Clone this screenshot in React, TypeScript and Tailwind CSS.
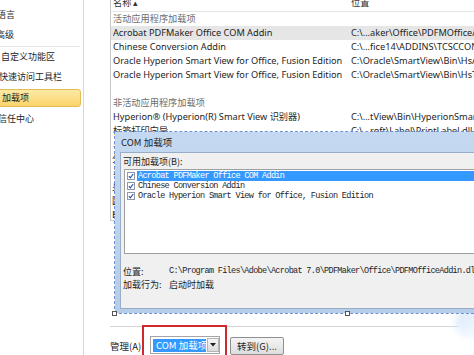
import React from "react";

const cjk = { fontFamily: '"Noto Sans CJK SC", "Noto Sans", sans-serif' };
const ui = { fontFamily: '"Noto Sans", "Noto Sans CJK SC", sans-serif' };
const mono = { fontFamily: '"Liberation Mono", "Noto Sans CJK SC", monospace' };

const sideItems = [
  { label: "语言", shift: "-ml-[3px]" },
  { label: "高级", shift: "-ml-[4px]" },
];
const sideItems2 = [
  { label: "自定义功能区", shift: "ml-[1px]" },
  { label: "快速访问工具栏", shift: "-ml-[1px]" },
];

const activeRows = [
  ["Acrobat PDFMaker Office COM Addin", "C:\\...aker\\Office\\PDFMOfficeAddin.dll"],
  ["Chinese Conversion Addin", "C:\\...fice14\\ADDINS\\TCSCCONV.DLL"],
  ["Oracle Hyperion Smart View for Office, Fusion Edition", "C:\\Oracle\\SmartView\\Bin\\HsAddin.dll"],
  ["Oracle Hyperion Smart View for Office, Fusion Edition", "C:\\Oracle\\SmartView\\Bin\\HsTBar.xla"],
];

const hiddenRows = ["ミ", "分", "ミ", "身", "図", "E"];

const comItems = [
  "Acrobat PDFMaker Office COM Addin",
  "Chinese Conversion Addin",
  "Oracle Hyperion Smart View for Office, Fusion Edition",
];

const Check = () => (
  <span className="w-[8px] h-[8px] border border-[#8e9aab] bg-white flex items-center justify-center shrink-0">
    <svg width="6" height="6" viewBox="0 0 6 6">
      <path d="M0.8 3.2 L2.3 4.8 L5.2 1" fill="none" stroke="#2a4f9a" strokeWidth="1.1" />
    </svg>
  </span>
);

export default function App() {
  return (
    <div className="relative w-[474px] h-[355px] overflow-hidden bg-white text-[#1e1e1e]">
      <div className="flex h-full">
        {/* Sidebar */}
        <div className="w-[84px] shrink-0 border-r border-[#d6d6d6] pt-[5px] text-[9px] whitespace-nowrap" style={cjk}>
          {sideItems.map((s) => (
            <div key={s.label} className={`h-[20px] flex items-center ${s.shift}`}>
              {s.label}
            </div>
          ))}
          <div className="h-[2px] flex items-center pr-[3px]">
            <div className="h-px w-full bg-[#e3e3e3]" />
          </div>
          {sideItems2.map((s) => (
            <div key={s.label} className={`h-[20px] flex items-center ${s.shift}`}>
              {s.label}
            </div>
          ))}
          <div className="h-[22px] py-[2px] pr-[2px]">
            <div className="h-full -ml-[3px] pl-[4px] flex items-center rounded-r-[3px] border border-[#e2bd55] bg-gradient-to-b from-[#fde9a6] to-[#fbd469]">
              加载项
            </div>
          </div>
          <div className="h-[20px] flex items-center -ml-[2px]">信任中心</div>
        </div>

        {/* Main panel */}
        <div className="flex-1 flex flex-col pl-[26px] min-w-0">
          <div className="h-[226px] border-l border-b border-[#c9c9c9] overflow-hidden text-[9.2px] whitespace-nowrap" style={ui}>
            <div className="-mt-[6px] h-[18px] flex items-center border-b border-[#e6e6e6] text-[#333]">
              <span className="w-[240px] pl-[2px]" style={cjk}>名称 ▴</span>
              <span style={cjk}>位置</span>
            </div>
            <div className="h-[14px] flex items-center pl-[2px] text-[#6d6d6d]" style={cjk}>活动应用程序加载项</div>
            {activeRows.map(([n, p], i) => (
              <div key={i} className={`h-[14px] flex items-center ${i === 0 ? "bg-[#e6e6e6]" : ""}`}>
                <span className="w-[240px] pl-[2px] shrink-0">{n}</span>
                <span>{p}</span>
              </div>
            ))}
            <div className="h-[14px]" />
            <div className="h-[14px] flex items-center pl-[2px] text-[#6d6d6d]" style={cjk}>非活动应用程序加载项</div>
            <div className="h-[14px] flex items-center">
              <span className="w-[240px] pl-[2px] shrink-0">
                Hyperion® (Hyperion(R) Smart View <span style={cjk}>识别器</span>)
              </span>
              <span>C:\...tView\Bin\HyperionSmartTags.dll</span>
            </div>
            <div className="h-[14px] flex items-center">
              <span className="w-[240px] pl-[2px] shrink-0" style={cjk}>标签打印向导</span>
              <span>C:\...roft\Label\PrintLabel.dll</span>
            </div>
            {hiddenRows.map((c, i) => (
              <div key={i} className="h-[14px] flex items-center pl-[1px]" style={cjk}>
                {c}
              </div>
            ))}
          </div>

          <div className="mt-[105px] mr-[16px] h-px bg-[#d5d5d5]" />

          <div className="mt-[9px] flex items-start text-[9.5px] whitespace-nowrap" style={cjk}>
            <span className="mt-[3px] w-[32px]">管理(A):</span>
            <div className="relative ml-[8px] h-[18px] w-[70px] border border-[#a5a5a5] bg-white flex items-center pl-[2px]">
              <span className="h-[13px] w-[53px] bg-[#3399ff] text-white flex items-center pl-[3px] text-[9.5px]">
                COM 加载项
              </span>
              <span className="ml-[1px] h-[14px] w-[12px] border border-[#b5b5b5] bg-gradient-to-b from-[#f5f5f5] to-[#dcdcdc] flex items-center justify-center">
                <svg width="6" height="4" viewBox="0 0 6 4">
                  <path d="M0 0 L6 0 L3 3.5 Z" fill="#222" />
                </svg>
              </span>
              <div className="absolute -left-[9px] -top-[12px] w-[85px] h-[40px] border-2 border-[#d0282c]" />
            </div>
            <div className="ml-[10px] mt-[1px] h-[18px] w-[54px] rounded-[2px] border border-[#8f8f8f] bg-gradient-to-b from-[#f4f4f4] to-[#dedede] flex items-center justify-center">
              转到(G)...
            </div>
          </div>
        </div>
      </div>

      {/* aero glow at bottom-right */}
      <div className="absolute left-[455px] top-[308px] w-[40px] h-[30px] bg-gradient-to-br from-[#d7e8fa] to-transparent rounded-full blur-[3px]" />

      {/* COM add-in dialog */}
      <div className="absolute left-[114px] top-[131px] w-[380px] h-[183px] border border-dashed border-[#6d8fd3]">
        <div className="h-full flex flex-col bg-gradient-to-b from-[#c4d9f1] to-[#b6cde9] pl-[5px] pb-[4px]">
          <div className="h-[20px] flex items-center pl-[1px] text-[9.5px] text-[#1e1e1e]" style={cjk}>
            COM 加载项
          </div>
          <div className="flex-1 bg-[#f0f0f0] border border-[#98adc8] flex flex-col whitespace-nowrap">
            <div className="h-[15px] flex items-end pl-[2px] text-[9px]" style={cjk}>
              可用加载项(B):
            </div>
            <div className="mt-[1px] ml-[3px] h-[85px] border border-[#a0a0a0] bg-white pt-[1px] pl-[2px]">
              {comItems.map((t, i) => (
                <div key={t} className="h-[10px] flex items-center">
                  <Check />
                  <span
                    className={`ml-[2px] h-full flex-1 flex items-center pl-[1px] text-[8.5px] tracking-[-0.67px] ${
                      i === 0 ? "bg-[#3399ff] text-white" : ""
                    }`}
                    style={mono}
                  >
                    {t}
                  </span>
                </div>
              ))}
            </div>
            <div className="mt-[11px] pl-[2px] flex items-center h-[13px]">
              <span className="w-[46px] shrink-0 text-[9px]" style={cjk}>位置:</span>
              <span className="text-[8.5px] tracking-[-0.67px]" style={mono}>
                C:\Program Files\Adobe\Acrobat 7.0\PDFMaker\Office\PDFMOfficeAddin.dll
              </span>
            </div>
            <div className="pl-[2px] flex items-center h-[13px] text-[9px]" style={cjk}>
              <span className="w-[46px] shrink-0">加载行为:</span>
              <span>启动时加载</span>
            </div>
          </div>
        </div>
        {/* selection handles */}
        <div className="absolute -left-[3px] -bottom-[3px] w-[5px] h-[5px] border border-[#555] bg-white" />
        <div className="absolute left-[230px] -bottom-[3px] w-[5px] h-[5px] border border-[#555] bg-white" />
      </div>
    </div>
  );
}
